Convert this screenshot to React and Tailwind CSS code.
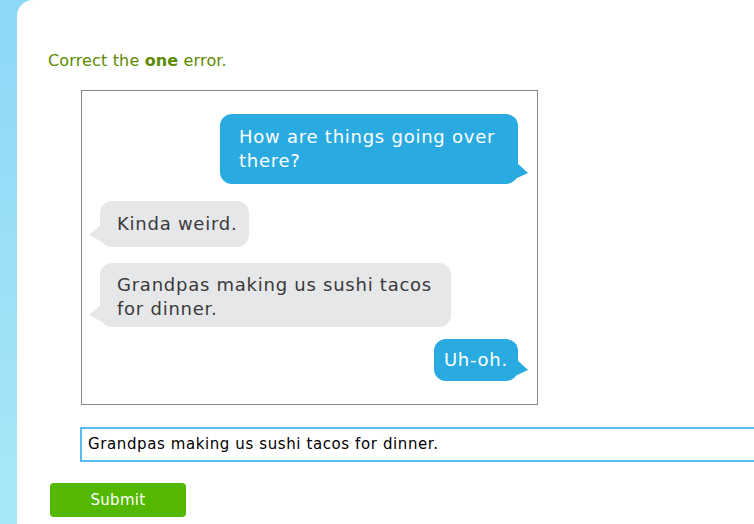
import React from "react";

const font = { fontFamily: '"DejaVu Sans", Verdana, sans-serif' };

function BlueBubble({ children, className = "", pad = "px-[19px] py-[11px]" }) {
  return (
    <div className={"relative self-end " + className}>
      <div className={"rounded-[12px] bg-[#29abe2] text-white text-[18px] leading-[24px] tracking-[0.75px] " + pad}>
        {children}
      </div>
      <svg className="absolute right-[-11px] bottom-[3px]" width="14" height="20" viewBox="0 0 14 20">
        <path d="M0 0 L13 12 L0 18 Z" fill="#29abe2" />
      </svg>
    </div>
  );
}

function GrayBubble({ children, className = "", pad = "py-[11px]" }) {
  return (
    <div className={"relative self-start " + className}>
      <div className={"rounded-[12px] bg-[#e6e7e9] text-[#3a3a3a] text-[18px] leading-[24px] tracking-[0.75px] pl-[17px] pr-[12px] " + pad}>
        {children}
      </div>
      <svg className="absolute left-[-12px] bottom-[3px]" width="14" height="20" viewBox="0 0 14 20">
        <path d="M14 0 L1 11 L14 18 Z" fill="#e6e7e9" />
      </svg>
    </div>
  );
}

export default function App() {
  return (
    <div
      className="w-[754px] h-[524px] flex bg-gradient-to-b from-[#8cd8f7] to-[#a9e8f8] overflow-hidden"
      style={font}
    >
      <div className="w-[17px] shrink-0" />
      <div className="flex-1 bg-white rounded-tl-[16px] flex flex-col">
        <div className="pl-[31px] pt-[51px] text-[16px] leading-[20px] tracking-[0.15px] text-[#5c8a00]">
          Correct the <span className="font-bold">one</span> error.
        </div>
        <div className="ml-[64px] mt-[19px] w-[457px] h-[315px] border border-[#8a8a8a] flex flex-col px-[18px] pt-[23px]">
          <BlueBubble className="w-[298px] mr-[1px]">How are things going over there?</BlueBubble>
          <GrayBubble className="mt-[17px] w-[149px] whitespace-nowrap">Kinda weird.</GrayBubble>
          <GrayBubble className="mt-[16px] w-[351px]" pad="pt-[10px] pb-[6px]">
            Grandpas making us sushi tacos for dinner.
          </GrayBubble>
          <BlueBubble className="mt-[12px] mr-[1px]" pad="px-[10px] py-[9px]">
            Uh-oh.
          </BlueBubble>
        </div>
        <div className="ml-[63px] mt-[22px] h-[35px] border-2 border-[#55bdf2] border-r-0 flex items-center pl-[6px] text-[15px] tracking-[0.6px] text-black">
          Grandpas making us sushi tacos for dinner.
        </div>
        <div className="ml-[33px] mt-[21px] w-[136px] h-[34px] rounded-[4px] bg-[#55b800] text-white text-[15px] tracking-[0.3px] flex items-center justify-center">
          Submit
        </div>
      </div>
    </div>
  );
}
